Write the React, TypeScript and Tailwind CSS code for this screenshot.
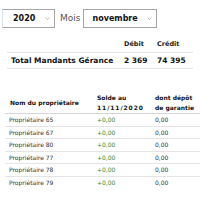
const rows = [
  { name: "Propriétaire 65", solde: "+0,00", depot: "0,00" },
  { name: "Propriétaire 67", solde: "+0,00", depot: "0,00" },
  { name: "Propriétaire 80", solde: "+0,00", depot: "0,00" },
  { name: "Propriétaire 77", solde: "+0,00", depot: "0,00" },
  { name: "Propriétaire 78", solde: "+0,00", depot: "0,00" },
  { name: "Propriétaire 79", solde: "+0,00", depot: "0,00" },
];

function Chevron() {
  return (
    <svg width="5" height="3" viewBox="0 0 6 4" className="shrink-0">
      <path d="M0.5 0.8 L3 3.2 L5.5 0.8" fill="none" stroke="#8a8a8a" strokeWidth="0.8" />
    </svg>
  );
}

export default function App() {
  return (
    <div
      className="h-[200px] w-[200px] overflow-hidden bg-white pt-[9px] text-[#222]"
      style={{ fontFamily: '"DejaVu Sans", Verdana, sans-serif' }}
    >
      <div className="flex items-center pl-[2px]">
        <div className="flex h-[19px] w-[53px] items-center justify-between border border-[#a6a6a6] border-l-[#d7e3ee] bg-white pl-[10px] pr-[4px]">
          <span className="text-[8px] font-bold text-[#111]">2020</span>
          <Chevron />
        </div>
        <span className="ml-[5px] text-[9px] text-[#555]">Mois</span>
        <div className="ml-[3px] flex h-[19px] w-[74px] items-center justify-between border border-[#a6a6a6] bg-white pl-[8px] pr-[4px]">
          <span className="text-[8px] font-bold text-[#111]">novembre</span>
          <Chevron />
        </div>
      </div>

      <div className="ml-[7px] mt-[10px] w-[186px]">
        <div className="grid h-[15px] grid-cols-[117px_33px_1fr] items-center border-b border-[#e2e2e2] text-[6.5px] font-bold text-[#222]">
          <span />
          <span>Débit</span>
          <span>Crédit</span>
        </div>
        <div className="grid h-[16px] grid-cols-[117px_33px_1fr] items-center border-b border-[#e2e2e2] text-[7.5px] font-bold text-[#111]">
          <span className="pl-[4px]">Total Mandants Gérance</span>
          <span>2 369</span>
          <span>74 395</span>
        </div>
      </div>

      <div className="ml-[5px] mt-[23px] w-[195px]">
        <div className="grid h-[22px] grid-cols-[92px_58px_1fr] items-center border-b border-[#d6d6d6] text-[6px] font-bold leading-[10px] text-[#111]">
          <span className="pl-[5px]">Nom du propriétaire</span>
          <span>
            Solde au
            <br />
            <span className="tracking-[0.9px]">11/11/2020</span>
          </span>
          <span>
            dont dépôt
            <br />
            de garantie
          </span>
        </div>
        {rows.map((r, i) => (
          <div
            key={i}
            className="grid h-[12.5px] grid-cols-[92px_58px_1fr] items-center border-b border-[#e4e4e4] text-[6px] text-[#333] last:border-b-0"
          >
            <span className="pl-[4px]">{r.name}</span>
            <span className="text-[#2e8b2e]">{r.solde}</span>
            <span>{r.depot}</span>
          </div>
        ))}
      </div>
    </div>
  );
}
